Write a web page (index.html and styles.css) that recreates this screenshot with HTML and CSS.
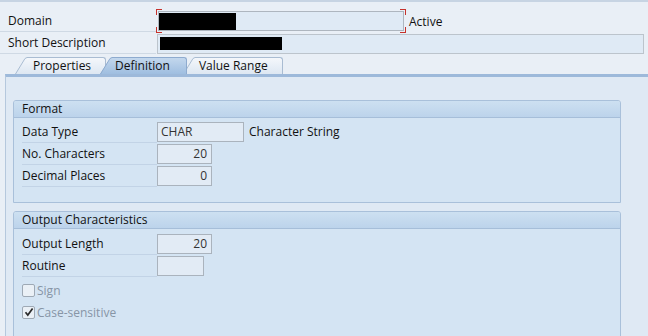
FILE: index.html
```html
<!DOCTYPE html>
<html>
<head>
<meta charset="utf-8">
<link rel="stylesheet" href="styles.css">
</head>
<body>
<div class="topline"></div>
<div class="head">
  <div class="hrow">
    <div class="hlabel">Domain</div>
    <div class="focus">
      <div class="hfield f-domain"><span class="redact r1"></span></div>
    </div>
    <span class="status">Active</span>
  </div>
  <div class="hrow">
    <div class="hlabel">Short Description</div>
    <div class="hfield f-desc"><span class="redact r2"></span></div>
  </div>
</div>

<div class="tabs">
  <div class="tab t-prop">
    <svg class="slant" width="12" height="17" viewBox="0 0 12 17">
      <defs><linearGradient id="gi" x1="0" y1="0" x2="0" y2="1"><stop offset="0" stop-color="#f4f7fb"/><stop offset="1" stop-color="#dde7f2"/></linearGradient></defs>
      <polygon points="0,17 10,1.5 12,0.5 12,17" fill="url(#gi)"/>
      <polyline points="0.5,17 10,1.5 12,0.5" fill="none" stroke="#a9bcd2" stroke-width="1"/>
    </svg>
    <span class="tab-body">Properties</span>
  </div>
  <div class="tab t-def active">
    <svg class="slant" width="12" height="17" viewBox="0 0 12 17">
      <defs><linearGradient id="ga" x1="0" y1="0" x2="0" y2="1"><stop offset="0" stop-color="#c3d7ed"/><stop offset="1" stop-color="#9fbee0"/></linearGradient></defs>
      <polygon points="0,17 10,1.5 12,0.5 12,17" fill="url(#ga)"/>
      <polyline points="0.5,17 10,1.5 12,0.5" fill="none" stroke="#8eabcf" stroke-width="1"/>
    </svg>
    <span class="tab-body">Definition</span>
  </div>
  <div class="tab t-val">
    <svg class="slant" width="12" height="17" viewBox="0 0 12 17">
      <polygon points="0,17 10,1.5 12,0.5 12,17" fill="url(#gi)"/>
      <polyline points="0.5,17 10,1.5 12,0.5" fill="none" stroke="#a9bcd2" stroke-width="1"/>
    </svg>
    <span class="tab-body">Value Range</span>
  </div>
</div>

<div class="content">
  <section class="group">
    <div class="ghead">Format</div>
    <div class="gbody">
      <div class="row">
        <div class="label">Data Type</div>
        <div class="field w-char">CHAR</div>
        <span class="desc">Character String</span>
      </div>
      <div class="row">
        <div class="label">No. Characters</div>
        <div class="field w-num num">20</div>
      </div>
      <div class="row">
        <div class="label">Decimal Places</div>
        <div class="field w-num num">0</div>
      </div>
    </div>
  </section>

  <section class="group group2">
    <div class="ghead">Output Characteristics</div>
    <div class="gbody">
      <div class="row">
        <div class="label">Output Length</div>
        <div class="field w-num num">20</div>
      </div>
      <div class="row">
        <div class="label">Routine</div>
        <div class="field w-routine"></div>
      </div>
      <div class="chkrow first">
        <span class="box"></span><span class="chklabel">Sign</span>
      </div>
      <div class="chkrow">
        <span class="box"><svg width="10" height="10" viewBox="0 0 10 10"><path d="M1.5 5.2 L3.8 8 L8.6 1.6" fill="none" stroke="#2b2b2b" stroke-width="1.7"/></svg></span><span class="chklabel">Case-sensitive</span>
      </div>
    </div>
  </section>
</div>
</body>
</html>
```

FILE: styles.css
```css
html, body {
  margin: 0;
  padding: 0;
  height: 336px;
  overflow: hidden;
}
body {
  background: #e9eff6;
  font-family: "Open Sans", "Liberation Sans", sans-serif;
  font-size: 12px;
  color: #111;
}
.topline {
  height: 2px;
  background: #c7d4e3;
}
.head {
  padding-top: 8px;
}
.hrow {
  display: flex;
  align-items: center;
  height: 22px;
}
.hlabel {
  box-sizing: border-box;
  width: 156px;
  height: 22px;
  line-height: 21px;
  padding-left: 8px;
  border-bottom: 1px solid #cfd9e4;
}
.focus {
  box-sizing: border-box;
  width: 250px;
  height: 24px;
  padding: 2px;
  background:
    linear-gradient(#c6322c, #c6322c) left top / 6px 1px no-repeat,
    linear-gradient(#c6322c, #c6322c) left top / 1px 6px no-repeat,
    linear-gradient(#c6322c, #c6322c) right top / 6px 1px no-repeat,
    linear-gradient(#c6322c, #c6322c) right top / 1px 6px no-repeat,
    linear-gradient(#c6322c, #c6322c) left bottom / 6px 1px no-repeat,
    linear-gradient(#c6322c, #c6322c) left bottom / 1px 6px no-repeat,
    linear-gradient(#c6322c, #c6322c) right bottom / 6px 1px no-repeat,
    linear-gradient(#c6322c, #c6322c) right bottom / 1px 6px no-repeat;
}
.hfield {
  box-sizing: border-box;
  height: 20px;
  background: #dfeaf5;
  border: 1px solid #aeb6bf;
  display: flex;
}
.f-domain {
  width: 246px;
  padding: 1px 0 0 0;
}
.f-desc {
  width: 487px;
  margin-left: 1px;
  margin-top: 1px;
  border-color: #bcc4cc;
  padding: 2px 0 0 2px;
}
.redact {
  display: block;
  background: #000;
}
.r1 { width: 77px; height: 17px; }
.r2 { width: 122px; height: 13px; }
.status {
  margin-left: 3px;
}

.tabs {
  display: flex;
  margin-top: 3px;
  padding-left: 15px;
  height: 17px;
}
.tab {
  display: flex;
  height: 17px;
  z-index: 1;
}
.slant {
  display: block;
  flex: none;
}
.tab-body {
  box-sizing: border-box;
  height: 17px;
  line-height: 16px;
  padding: 0 14px 0 5px;
  border-top: 1px solid #a9bcd2;
  border-right: 1px solid #a9bcd2;
  border-top-right-radius: 3px;
  background: linear-gradient(#f4f7fb, #dde7f2);
}
.t-prop .tab-body { padding-left: 6px; padding-right: 14px; }
.t-def {
  margin-left: -6px;
  z-index: 3;
}
.t-def .tab-body {
  padding-left: 3px;
  padding-right: 16px;
  border-color: #8eabcf;
  background: linear-gradient(#c3d7ed, #9fbee0);
}
.t-val {
  margin-left: -4px;
  z-index: 2;
}
.t-val .tab-body { padding-left: 4px; padding-right: 14px; }

.content {
  margin-left: 5px;
  border-left: 1px solid #b5c8dd;
  border-top: 3px solid #9db9da;
  background: #dfe9f4;
  padding: 23px 27px 0 7px;
  height: 300px;
}
.group {
  border: 1px solid #a9c0da;
  border-radius: 3px 3px 0 0;
  background: #d4e4f3;
}
.group2 {
  margin-top: 8px;
}
.ghead {
  height: 16px;
  line-height: 16px;
  padding-left: 8px;
  border-bottom: 1px solid #a6bed9;
  border-radius: 2px 2px 0 0;
  background: linear-gradient(#cde0f1, #bcd3eb);
}
.gbody {
  padding: 3px 8px 15px 8px;
}
.group2 .gbody {
  padding-top: 4px;
  padding-bottom: 40px;
}
.row {
  display: flex;
  align-items: flex-start;
  height: 22px;
}
.label {
  box-sizing: border-box;
  width: 135px;
  height: 22px;
  line-height: 21px;
  border-bottom: 1px solid #c2d3e6;
  flex: none;
}
.field {
  box-sizing: border-box;
  height: 20px;
  margin-top: 1px;
  background: #e2ebf5;
  border: 1px solid #aab3bd;
  font-family: "Open Sans", "Liberation Sans", sans-serif;
  font-size: 12px;
  line-height: 18px;
  padding: 0 3px;
  color: #333;
  flex: none;
}
.num { text-align: right; padding-right: 4px; }
.w-char { width: 87px; }
.w-num { width: 55px; }
.w-routine { width: 47px; }
.desc {
  margin-left: 5px;
  line-height: 21px;
}
.chkrow {
  display: flex;
  align-items: center;
  height: 22px;
  color: #8795a6;
}
.chkrow.first {
  margin-top: 2px;
}
.box {
  box-sizing: border-box;
  width: 13px;
  height: 13px;
  border: 1px solid #9ea9b5;
  border-radius: 2px;
  background: #eaf0f6;
  margin-right: 2px;
  display: flex;
  align-items: center;
  justify-content: center;
}
.box svg { display: block; }
```
